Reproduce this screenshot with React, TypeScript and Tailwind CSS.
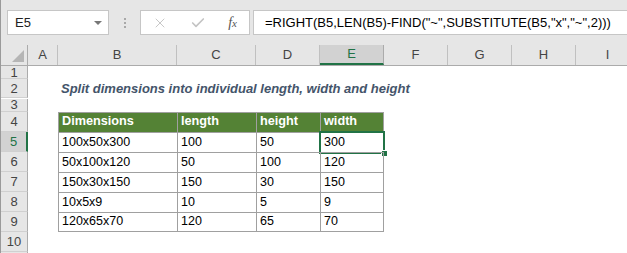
import { X, Check } from 'lucide-react'

const cols = ['A', 'B', 'C', 'D', 'E', 'F', 'G', 'H', 'I']
const widths = ['w-[30px]', 'w-[119px]', 'w-[79px]', 'w-[64px]', 'w-[64px]', 'w-[64px]', 'w-[64px]', 'w-[64px]', 'w-[64px]']

const header = ['Dimensions', 'length', 'height', 'width']
const data = [
  ['100x50x300', '100', '50', '300'],
  ['50x100x120', '50', '100', '120'],
  ['150x30x150', '150', '30', '150'],
  ['10x5x9', '10', '5', '9'],
  ['120x65x70', '120', '65', '70'],
]

function RowHead({ n, h, active }: { n?: number; h: string; active?: boolean }) {
  return (
    <div
      className={`w-[27px] shrink-0 ${h} flex items-center justify-center border-b border-[#d0d0d0] text-[13px] leading-none overflow-hidden ${
        active
          ? 'bg-[#d2d2d2] text-[#217346] border-r-2 border-r-[#217346]'
          : 'bg-[#e6e6e6] text-[#444] border-r border-r-[#ababab]'
      }`}
    >
      {n}
    </div>
  )
}

function TableRow({ cells, head, last, sel }: { cells: string[]; head?: boolean; last?: boolean; sel?: boolean }) {
  return (
    <div className="flex h-full">
      <div className="w-[30px]" />
      {cells.map((c, i) => (
        <div
          key={i}
          className={`${widths[i + 1]} relative h-full flex items-center pl-[3px] border-t border-l border-[#a0a0a0] ${
            i === 3 ? 'border-r' : ''
          } ${last ? 'border-b' : ''} ${
            head ? 'bg-[#548235] text-white font-bold text-[12.7px]' : 'text-black text-[12.5px]'
          }`}
        >
          {c}
          {sel && i === 3 && (
            <>
              <div className="absolute -left-[2px] -top-[2px] -right-[2px] -bottom-[2px] border-2 border-[#217346]" />
              <div className="absolute -right-[5px] -bottom-[5px] w-[7px] h-[7px] bg-[#217346] border border-white" />
            </>
          )}
        </div>
      ))}
    </div>
  )
}

export default function App() {
  return (
    <div className="w-[627px] h-[253px] overflow-hidden bg-white border-l border-[#9a9a9a]" style={{ fontFamily: '"Liberation Sans", Arial, sans-serif' }}>
      {/* formula bar */}
      <div className="h-[45px] bg-[#e6e6e6] flex items-start pt-[10px] pl-[6px]">
        <div className="w-[102px] h-[25px] bg-white border border-[#c6c6c6] flex items-center justify-between pl-[7px] pr-[6px]">
          <span className="text-[13px] text-[#222]">E5</span>
          <span className="w-0 h-0 border-l-[4px] border-r-[4px] border-t-[4px] border-l-transparent border-r-transparent border-t-[#777]" />
        </div>
        <div className="w-[31px] h-[25px] flex flex-col items-center justify-center gap-[2px]">
          <span className="w-[2px] h-[2px] bg-[#a8a8a8]" />
          <span className="w-[2px] h-[2px] bg-[#a8a8a8]" />
          <span className="w-[2px] h-[2px] bg-[#a8a8a8]" />
        </div>
        <div className="w-[110px] h-[25px] bg-white border border-[#c6c6c6] flex items-center pl-[11px] pr-[12px] justify-between">
          <X size={16} strokeWidth={1.25} color="#bcbcbc" />
          <Check size={16} strokeWidth={2.5} color="#c4c4c4" />
          <span className="text-[14px] italic text-[#555]" style={{ fontFamily: '"Liberation Serif", serif' }}>
            f<span className="text-[11px]">x</span>
          </span>
        </div>
        <div className="ml-[3px] flex-1 h-[25px] bg-white border border-[#c6c6c6] border-r-0 flex items-center pl-[11px] text-[13px] text-black whitespace-nowrap overflow-hidden">
          =RIGHT(B5,LEN(B5)-FIND("~",SUBSTITUTE(B5,"x","~",2)))
        </div>
      </div>

      {/* column headers */}
      <div className="flex h-[21px] bg-[#e6e6e6] border-b border-[#ababab]">
        <div className="w-[27px] shrink-0 relative border-r border-[#ababab]">
          <svg className="absolute right-[3px] bottom-[3px]" width="12" height="12" viewBox="0 0 12 12">
            <path d="M12 0 L12 12 L0 12 Z" fill="#b5b5b5" />
          </svg>
        </div>
        {cols.map((c, i) => (
          <div
            key={c}
            className={`${widths[i]} shrink-0 flex items-center justify-center text-[13px] ${
              c === 'E'
                ? 'bg-[#d2d2d2] text-[#217346] border-b-2 border-[#217346] border-r border-r-[#ababab]'
                : 'text-[#444] border-r border-[#c0c0c0]'
            }`}
          >
            {c}
          </div>
        ))}
      </div>

      {/* rows */}
      <div className="flex">
        <RowHead n={1} h="h-[13px]" />
      </div>
      <div className="flex">
        <RowHead n={2} h="h-[19px]" />
        <div className="flex-1 flex items-center pl-[33px] text-[13px] font-bold italic text-[#44546a] whitespace-nowrap">
          Split dimensions into individual length, width and height
        </div>
      </div>
      <div className="flex">
        <RowHead n={3} h="h-[13px]" />
      </div>
      <div className="flex h-[20px]">
        <RowHead n={4} h="h-[20px]" />
        <div className="flex-1">
          <TableRow cells={header} head />
        </div>
      </div>
      {data.map((r, i) => (
        <div key={i} className="flex h-[20px]">
          <RowHead n={5 + i} h="h-[20px]" active={i === 0} />
          <div className="flex-1">
            <TableRow cells={r} last={i === data.length - 1} sel={i === 0} />
          </div>
        </div>
      ))}
      <div className="flex">
        <RowHead n={10} h="h-[20px]" />
      </div>
      <div className="flex">
        <RowHead h="h-[20px]" />
      </div>
    </div>
  )
}
